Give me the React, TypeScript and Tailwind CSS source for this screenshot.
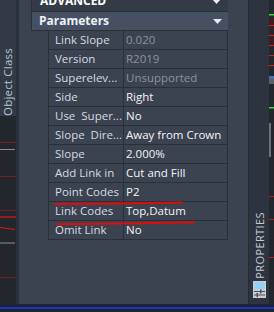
import React from "react";

const rows: { name: string; value: string; dim?: boolean }[] = [
  { name: "Link Slope", value: "0.020", dim: true },
  { name: "Version", value: "R2019", dim: true },
  { name: "Superelev...", value: "Unsupported", dim: true },
  { name: "Side", value: "Right" },
  { name: "Use  Super...", value: "No" },
  { name: "Slope  Dire...", value: "Away from Crown" },
  { name: "Slope", value: "2.000%" },
  { name: "Add Link in", value: "Cut and Fill" },
  { name: "Point Codes", value: "P2" },
  { name: "Link Codes", value: "Top,Datum" },
  { name: "Omit Link", value: "No" },
];

function Arrow() {
  return (
    <svg width="9" height="5" viewBox="0 0 9 5" className="block">
      <path d="M0 0 L9 0 L4.5 5 Z" fill="#e6e9ee" />
    </svg>
  );
}

function PropIcon() {
  return (
    <svg width="13" height="17" viewBox="0 0 13 17" className="block">
      <rect x="0" y="0" width="13" height="17" fill="#c9ccd1" />
      <rect x="1.5" y="1.5" width="10" height="6.5" fill="#8fd1fb" />
      <rect x="1" y="10" width="11" height="1" fill="#4a4f57" />
      <rect x="1" y="13.5" width="11" height="1" fill="#4a4f57" />
      <rect x="7" y="8.5" width="1.5" height="4" fill="#4a4f57" />
      <rect x="3.5" y="12" width="1.5" height="4" fill="#4a4f57" />
    </svg>
  );
}

export default function App() {
  return (
    <div className="relative w-[274px] h-[312px] overflow-hidden bg-[#22272e] flex flex-col font-['Open_Sans',sans-serif]">
      <div className="flex h-[304px]">
        {/* left strip */}
        <div className="w-[16px] flex flex-col">
          <div className="h-[116px] bg-[#333a46] flex justify-center pt-[23px]">
            <span className="[writing-mode:vertical-rl] rotate-180 text-[11.5px] leading-[12px] text-[#b3c1d6] tracking-[0.2px] whitespace-nowrap">
              Object Class
            </span>
          </div>
          <div className="flex-1 bg-[#22272e]">
            <svg width="16" height="188" viewBox="0 0 16 188" className="block">
              <line x1="0" y1="26.5" x2="16" y2="26.5" stroke="#6e1f24" />
              <line x1="0" y1="33.5" x2="15" y2="33.5" stroke="#8a8f96" />
              <line x1="0" y1="60.5" x2="16" y2="60.5" stroke="#6e1f24" />
              <line x1="0" y1="94.5" x2="16" y2="94.5" stroke="#6e1f24" />
              <line x1="0" y1="101" x2="16" y2="101" stroke="#e01818" strokeWidth="1.2" />
              <line x1="0" y1="111.5" x2="15" y2="113.5" stroke="#e01818" strokeWidth="1.2" />
              <line x1="0" y1="127" x2="15" y2="127" stroke="#8a8f96" />
              <line x1="0" y1="161.5" x2="16" y2="161.5" stroke="#6e1f24" />
            </svg>
          </div>
        </div>
        <div className="w-[3px] bg-[#2a2f38]" />
        {/* palette */}
        <div className="w-[229px] bg-[#3b4250] flex flex-col pl-[12px] pr-[20px]">
          <div className="mt-[-9px] h-[20px] bg-[#343b47] flex items-center justify-between pl-[8px] pr-[7px] border-l border-[#2a2f38]">
            <span className="text-[12px] font-bold text-white leading-none">ADVANCED</span>
            <Arrow />
          </div>
          <div className="h-[20px] bg-[#465063] border-y border-l border-[#2a2f38] flex items-center justify-between pl-[7px] pr-[6px]">
            <span className="text-[12px] font-bold text-[#eef1f5] leading-none">Parameters</span>
            <Arrow />
          </div>
          <div className="ml-[17px] border-l border-r border-[#2a2f38]">
            {rows.map((r) => (
              <div key={r.name} className="flex h-[19px] border-b border-[#2a2f38]">
                <div className="w-[75px] border-r border-[#2a2f38] pl-[6px] text-[11.5px] leading-[18px] text-[#d6dbe2] whitespace-pre overflow-hidden">
                  {r.name}
                </div>
                <div
                  className={
                    r.dim
                      ? "flex-1 pl-[2px] text-[11.5px] leading-[18px] text-[#8d939c] whitespace-nowrap overflow-hidden"
                      : "flex-1 pl-[2px] text-[11.5px] leading-[18px] text-[#f3f4f6] whitespace-nowrap overflow-hidden"
                  }
                >
                  {r.value}
                </div>
              </div>
            ))}
          </div>
          <div className="flex-1" />
        </div>
        <div className="w-[1px] bg-[#262b33]" />
        {/* right strip */}
        <div className="w-[20px] bg-[#2e343f] flex flex-col items-center justify-end pb-[6px]">
          <span className="[writing-mode:vertical-rl] rotate-180 text-[11px] leading-[11px] text-[#c3cad4] tracking-[0.4px] whitespace-nowrap mb-[2px]">
            PROPERTIES
          </span>
          <PropIcon />
        </div>
        <div className="w-[5px] bg-[#22272e]">
          <svg width="5" height="304" viewBox="0 0 5 304" className="block">
            <rect x="0" y="14" width="5" height="1.5" fill="#3fd23f" />
            <rect x="0" y="18" width="5" height="12" fill="#3a1e24" />
            <rect x="0" y="25" width="5" height="1" fill="#d61c1c" />
            <rect x="0" y="34" width="5" height="12" fill="#3a1e24" />
            <rect x="0" y="35" width="5" height="1" fill="#d61c1c" />
            <rect x="0" y="45" width="5" height="1" fill="#d61c1c" />
            <rect x="0" y="55" width="5" height="1" fill="#d61c1c" />
            <rect x="0" y="65" width="5" height="1" fill="#d61c1c" />
            <rect x="0" y="76" width="5" height="3" fill="#4a6fb0" />
            <rect x="0" y="79" width="5" height="5" fill="#5b6069" />
            <rect x="0" y="107" width="5" height="1.5" fill="#3fd23f" />
            <rect x="0" y="123" width="2" height="34" fill="#6b7078" />
            <rect x="0" y="196" width="5" height="1" fill="#b01d1d" />
            <rect x="0" y="219" width="5" height="1" fill="#b01d1d" />
            <rect x="0" y="257" width="5" height="1" fill="#b01d1d" />
          </svg>
        </div>
      </div>
      <div className="flex-1 bg-[#1f242b] flex flex-col justify-center">
        <div className="h-[2px] bg-[#1a2fd8]" />
      </div>
      {/* hand-drawn annotation lines */}
      <svg width="274" height="312" viewBox="0 0 274 312" className="absolute top-0 left-0 pointer-events-none">
        <path d="M55 204 L137 203.2 L182 202.6" stroke="#e00b0b" strokeWidth="2" fill="none" strokeLinecap="round" />
        <path d="M57 224.2 L137 223.3 L194 222.2" stroke="#e00b0b" strokeWidth="2" fill="none" strokeLinecap="round" />
      </svg>
    </div>
  );
}
